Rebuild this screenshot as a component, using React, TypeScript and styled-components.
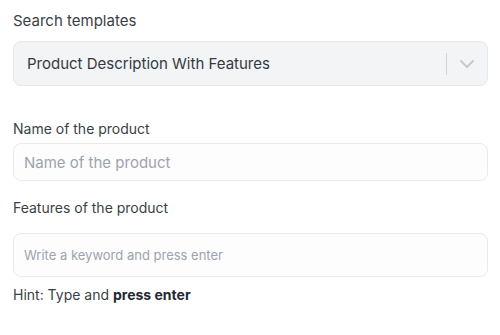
import React from 'react';
import styled, { createGlobalStyle } from 'styled-components';

const GlobalStyle = createGlobalStyle`
  * { box-sizing: border-box; }
  body {
    margin: 0;
    background: #ffffff;
    font-family: Inter, "Noto Sans", sans-serif;
    color: #374151;
  }
`;

const Form = styled.div`
  display: flex;
  flex-direction: column;
  padding: 11px 12px 0 13px;
`;

const Label = styled.label<{ $mb: number; $mt?: number; $fs?: number }>`
  display: block;
  font-size: ${(p) => p.$fs ?? 14}px;
  line-height: 20px;
  color: #3a3f47;
  margin-top: ${(p) => p.$mt ?? 0}px;
  margin-bottom: ${(p) => p.$mb}px;
`;

const Select = styled.div`
  display: flex;
  align-items: center;
  height: 45px;
  background: #f3f4f6;
  border: 1px solid #e5e7eb;
  border-radius: 8px;
  padding-left: 13px;
`;

const SelectValue = styled.span`
  flex: 1;
  font-size: 15px;
  color: #333a44;
`;

const Separator = styled.span`
  width: 1px;
  height: 22px;
  background: #d1d5db;
`;

const Chevron = styled.span`
  display: flex;
  align-items: center;
  justify-content: center;
  width: 40px;
  color: #c4c8cf;
`;

const Input = styled.input<{ $h: number; $fs: number }>`
  width: 100%;
  height: ${(p) => p.$h}px;
  border: 1px solid #e9eaed;
  border-radius: 8px;
  background: #fdfdfd;
  padding: 0 10px;
  font-family: inherit;
  font-size: ${(p) => p.$fs}px;
  color: #374151;
  outline: none;
  &::placeholder {
    color: #9ca3af;
  }
`;

const Hint = styled.p`
  margin: 8px 0 0;
  font-size: 14px;
  line-height: 20px;
  color: #3a3f47;
  b {
    font-weight: 700;
    color: #1f2937;
  }
`;

export default function App() {
  return (
    <>
      <GlobalStyle />
      <Form>
        <Label $fs={15} $mb={10}>Search templates</Label>
        <Select>
          <SelectValue>Product Description With Features</SelectValue>
          <Separator />
          <Chevron>
            <svg width="14" height="8" viewBox="0 0 14 8" fill="none" stroke="currentColor" strokeWidth="1.8" strokeLinecap="round" strokeLinejoin="round">
              <polyline points="1,1 7,7 13,1" />
            </svg>
          </Chevron>
        </Select>
        <Label $mt={33} $mb={4}>Name of the product</Label>
        <Input $h={38} $fs={15} placeholder="Name of the product" />
        <Label $mt={17} $mb={15}>Features of the product</Label>
        <Input $h={44} $fs={13} placeholder="Write a keyword and press enter" />
        <Hint>
          Hint: Type and <b>press enter</b>
        </Hint>
      </Form>
    </>
  );
}
